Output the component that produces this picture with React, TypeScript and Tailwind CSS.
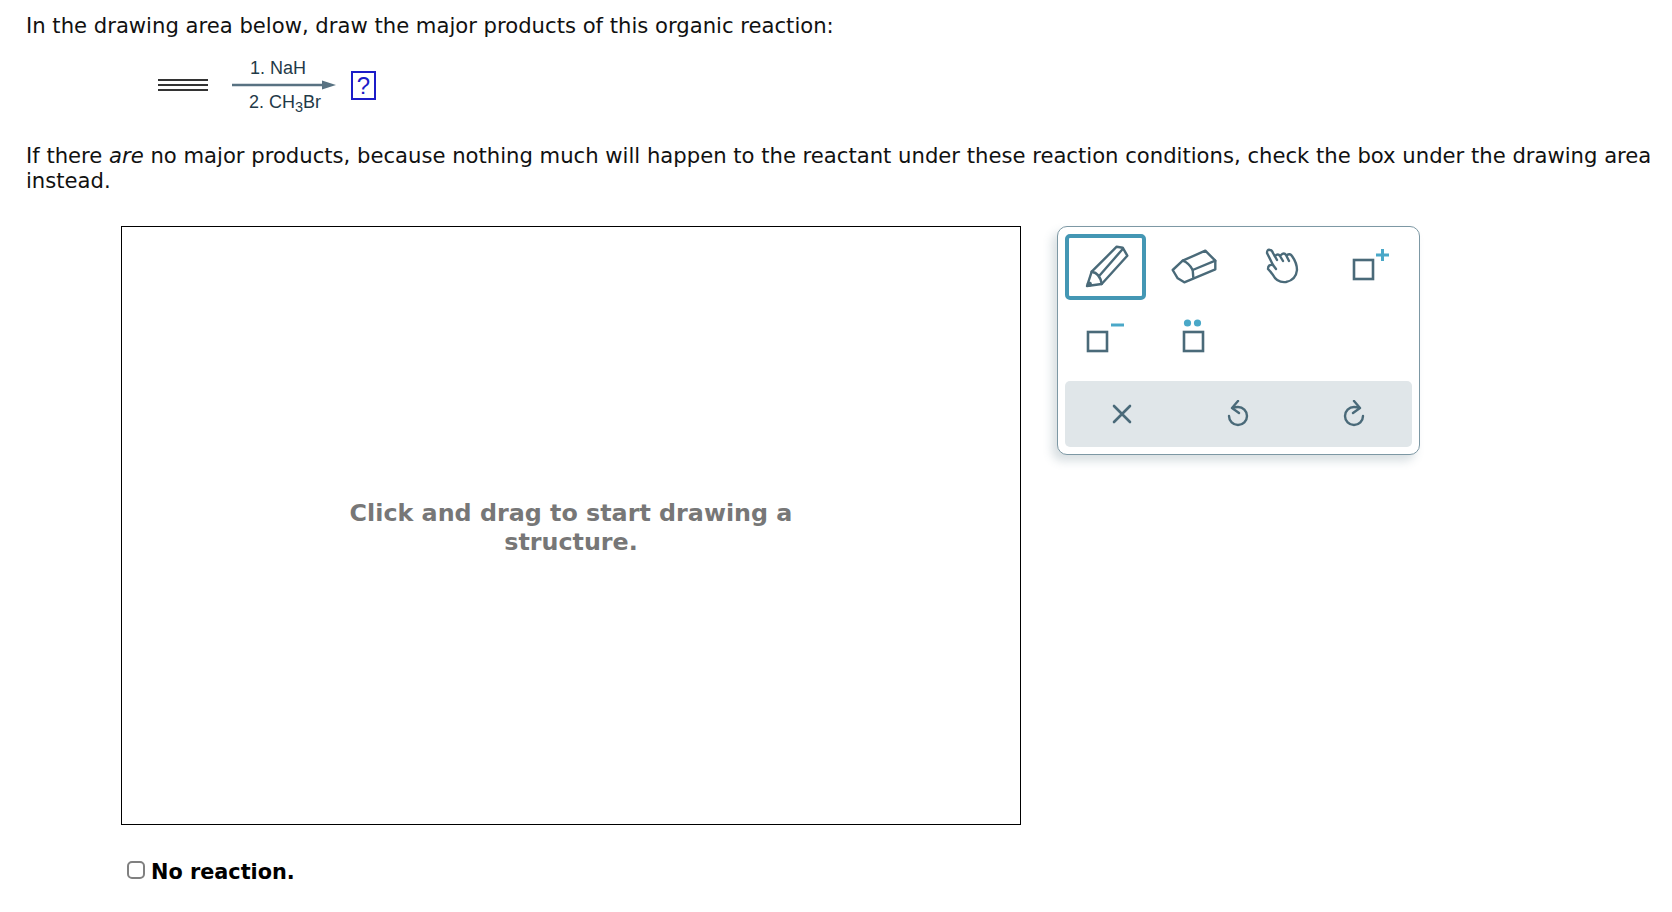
import React from "react";

const S = "#4a6a79";
const A = "#4aa8c8";

function Square({ x = 0, y = 0 }: { x?: number; y?: number }) {
  return <rect x={x} y={y} width="19" height="19" fill="none" stroke={S} strokeWidth="2.6" />;
}

function Pencil() {
  return (
    <svg width="46" height="46" viewBox="0 0 46 46" fill="none" stroke={S} strokeWidth="2.4" strokeLinejoin="round" strokeLinecap="round">
      <path d="M8.7 27.7 L33.7 2.7 L39.7 3.7 L44.3 11.7 L18.7 40 L4 42 Z" />
      <path d="M8.7 27.7 Q17 29 18.7 40" />
      <path d="M17 31 L39.7 5" />
      <circle cx="6.3" cy="40" r="2.6" fill={S} stroke="none" />
    </svg>
  );
}

function Eraser() {
  return (
    <svg width="46" height="36" viewBox="0 0 46 36" fill="none" stroke={S} strokeWidth="2.4" strokeLinejoin="round" strokeLinecap="round">
      <path d="M1.7 21 L11.7 11.7 L34.3 1.7 L44.3 11.7 L44.3 20.3 L13.3 33.3 L6.7 29.3 Z" />
      <path d="M11.7 11.7 Q18 14 21.7 21 L44.3 11.7" />
      <path d="M21.7 21 L22.3 28.3" />
    </svg>
  );
}

function Hand() {
  return (
    <svg width="36" height="38" viewBox="0 0 36 38" fill="none" stroke={S} strokeWidth="2.4" strokeLinejoin="round" strokeLinecap="round">
      <path d="M9 18 L3 6 Q3 2 6 3 Q8 3 9 6 L13 13" />
      <path d="M11 9 Q14 6 16 9 L19 14" />
      <path d="M17 8 Q20 5 22 8 L25 14" />
      <path d="M23 8 Q26 6 28 9 Q33 16 33 23 Q32 33 22 35 Q13 36 9 28 Q6 24 4 22 Q4 17 9 18 L12 22" />
    </svg>
  );
}

function Undo({ flip = false }: { flip?: boolean }) {
  return (
    <svg width="22" height="27" viewBox="0 0 22 27" fill="none" stroke={S} strokeWidth="2.4" strokeLinecap="round" strokeLinejoin="round" className={flip ? "-scale-x-100" : ""}>
      <path d="M6 8 Q8 7 11 7 A9 9 0 1 1 2 16" />
      <path d="M11 1 L5 8 L12 13" />
    </svg>
  );
}

export default function App() {
  return (
    <div className="w-[1672px] h-[912px] overflow-hidden bg-white pl-[26px] pt-[13px] text-[21.15px] leading-[25.4px] text-[#111] font-['Verdana','DejaVu_Sans',sans-serif]">
      <p>In the drawing area below, draw the major products of this organic reaction:</p>

      <div className="mt-[14px] ml-[132px] h-[66px] flex items-center font-['Liberation_Sans',sans-serif] text-[#1f3a48]">
        <div className="w-[50px] h-[12px] flex flex-col justify-between">
          <div className="h-[2px] bg-[#333]" />
          <div className="h-[2px] bg-[#333]" />
          <div className="h-[2px] bg-[#333]" />
        </div>
        <div className="ml-[24px] w-[104px] flex flex-col text-[18px] leading-[20px]">
          <div className="pl-[18px]">1. NaH</div>
          <svg width="104" height="14" viewBox="0 0 104 14" className="block">
            <path d="M0 7 H92" stroke="#587282" strokeWidth="2.6" />
            <path d="M90 2.5 L104 7 L90 11.5 Z" fill="#587282" />
          </svg>
          <div className="pl-[17px]">
            2. CH<sub className="text-[14.5px] leading-none">3</sub>Br
          </div>
        </div>
        <div className="ml-[15px] mb-[-1px] w-[25px] h-[29px] border-2 border-[#1c1cc8] flex items-center justify-center text-[#1c1cc8] text-[24px] leading-none">
          ?
        </div>
      </div>

      <p className="mt-[24.6px] w-[1640px]">
        If there <em>are</em> no major products, because nothing much will happen to the reactant under these reaction conditions, check the box under the drawing area instead.
      </p>

      <div className="mt-[32px] ml-[95px] flex items-start">
        <div>
          <div className="w-[900px] h-[599px] border border-black flex items-center justify-center pt-[6px]">
            <div className="w-[460px] text-center font-bold text-[23.8px] leading-[29px] text-[#777]">
              Click and drag to start drawing a structure.
            </div>
          </div>
          <div className="mt-[35px] ml-[6px] flex items-center">
            <div className="w-[18px] h-[18px] -translate-y-[3px] rounded-[5px] border-2 border-[#808080] bg-white" />
            <span className="ml-[6px] font-bold text-[20.8px] text-black">No reaction.</span>
          </div>
        </div>

        <div className="ml-[36px] w-[363px] h-[229px] rounded-[10px] border border-[#7d98a4] bg-white shadow-[-5px_6px_10px_rgba(78,109,124,0.22)] p-[7px] flex flex-col">
          <div className="grid grid-cols-4 grid-rows-[66px_64px] gap-x-[14px] gap-y-[8px] w-[345px]">
            <div className="w-[81px] h-[66px] rounded-[5px] border-[4px] border-[#4497b4] flex items-center justify-center">
              <Pencil />
            </div>
            <div className="flex items-center justify-center pl-[3px]"><Eraser /></div>
            <div className="flex items-center justify-center pb-[2px]"><Hand /></div>
            <div className="flex items-center justify-center pr-[6px] pb-[4px]">
              <svg width="40" height="36" viewBox="0 0 40 36" fill="none">
                <Square x={5} y={13} />
                <path d="M27 8 H40 M33.5 2 V14" stroke={A} strokeWidth="3" />
              </svg>
            </div>
            <div className="flex items-center justify-center pt-[1px] pb-[9px] pl-[2px]">
              <svg width="40" height="36" viewBox="0 0 40 36" fill="none">
                <Square x={4} y={14} />
                <path d="M27 7 H40" stroke={A} strokeWidth="3" />
              </svg>
            </div>
            <div className="flex items-center justify-center pt-[1px] pb-[9px]">
              <svg width="24" height="36" viewBox="0 0 24 36" fill="none">
                <Square x={3} y={14} />
                <circle cx="6.5" cy="5" r="3.6" fill={A} />
                <circle cx="16.5" cy="5" r="3.6" fill={A} />
              </svg>
            </div>
          </div>
          <div className="mt-[9px] h-[67px] rounded-[5px] bg-[#e0e6e9] grid grid-cols-3 items-center">
            <div className="flex justify-center pr-[2px]">
              <svg width="20" height="20" viewBox="0 0 20 20" stroke={S} strokeWidth="2.6" strokeLinecap="round">
                <path d="M2 2 L18 18 M18 2 L2 18" />
              </svg>
            </div>
            <div className="flex justify-center"><Undo /></div>
            <div className="flex justify-center"><Undo flip /></div>
          </div>
        </div>
      </div>
    </div>
  );
}
